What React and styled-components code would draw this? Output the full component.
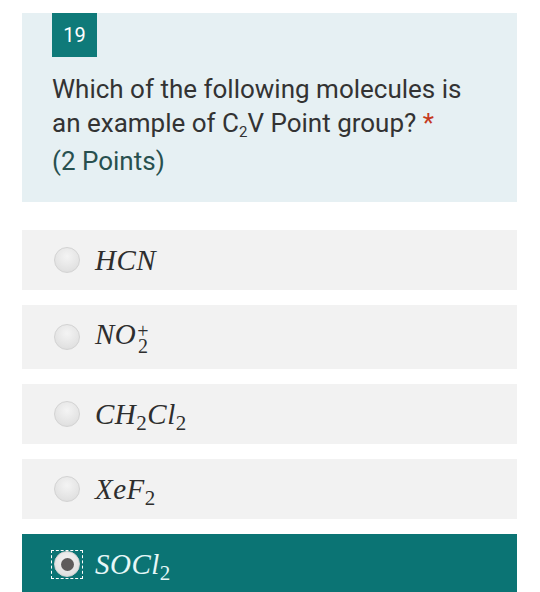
import React from 'react';
import styled, { createGlobalStyle } from 'styled-components';

const GlobalStyle = createGlobalStyle`
  html, body {
    margin: 0;
    padding: 0;
    background: #ffffff;
  }
  body {
    font-family: Roboto, "Liberation Sans", sans-serif;
  }
`;

const Page = styled.main`
  width: 540px;
  height: 592px;
  overflow: hidden;
  box-sizing: border-box;
  padding: 13px 23px 0 22px;
  display: flex;
  flex-direction: column;
`;

const Header = styled.section`
  background: #e6f0f3;
  padding: 0 24px 24px 30px;
  display: flex;
  flex-direction: column;
  align-items: flex-start;
`;

const Badge = styled.div`
  width: 45px;
  height: 44px;
  background: #0f7a79;
  color: #ffffff;
  font-size: 20px;
  display: flex;
  align-items: center;
  justify-content: center;
`;

const Question = styled.h2`
  margin: 15px 0 0;
  max-width: 412px;
  font-family: Roboto, sans-serif;
  font-weight: 400;
  font-size: 26px;
  line-height: 34px;
  color: #333333;
`;

const Sub = styled.span`
  font-size: 15px;
  position: relative;
  top: 5px;
`;

const Star = styled.span`
  color: #c5391e;
`;

const Points = styled.span`
  display: block;
  color: #28504f;
`;

const Options = styled.div`
  margin-top: 28px;
  display: flex;
  flex-direction: column;
  gap: 15px;
`;

const Option = styled.label`
  display: flex;
  align-items: center;
  gap: 14px;
  height: ${(p) => (p.$tall ? 64 : 60)}px;
  padding-left: 32px;
  background: ${(p) => (p.$selected ? '#0b7474' : '#f2f2f2')};
  color: ${(p) => (p.$selected ? '#e6f7f7' : '#2e2e2e')};
`;

const RadioWrap = styled.span`
  display: flex;
  align-items: center;
  justify-content: center;
  width: 32px;
  height: 29px;
  margin: 0 -2px 0 -3px;
  box-sizing: border-box;
  border: 1px dashed ${(p) => (p.$focus ? '#ffffff' : 'transparent')};
`;

const Radio = styled.span`
  width: 26px;
  height: 26px;
  border-radius: 50%;
  box-sizing: border-box;
  background: radial-gradient(circle at 50% 35%, #f4f4f4 0%, #e2e2e2 70%, #d6d6d6 100%);
  border: 1px solid #d3d3d3;
  display: flex;
  align-items: center;
  justify-content: center;

  &::after {
    content: '';
    display: ${(p) => (p.$checked ? 'block' : 'none')};
    width: 13px;
    height: 13px;
    border-radius: 50%;
    background: #5e5b5b;
  }
`;

const Formula = styled.span`
  font-family: "Liberation Serif", "Times New Roman", serif;
  font-style: italic;
  font-size: 29px;
  letter-spacing: 0.5px;
  line-height: 1;
`;

const Num = styled.span`
  font-style: normal;
  font-size: 21px;
  position: relative;
  top: 6px;
`;

const Stack = styled.span`
  display: inline-block;
  vertical-align: -9px;
  font-style: normal;
  font-size: 20px;
  line-height: 15px;
  margin-left: 1px;
  text-align: center;

  & > span {
    display: block;
  }
`;

const Choice = ({ children, selected, tall }) => (
  <Option $selected={selected} $tall={tall}>
    <RadioWrap $focus={selected}>
      <Radio $checked={selected} />
    </RadioWrap>
    <Formula>{children}</Formula>
  </Option>
);

export default function App() {
  return (
    <>
      <GlobalStyle />
      <Page>
        <Header>
          <Badge>19</Badge>
          <Question>
            Which of the following molecules is an example of C<Sub>2</Sub>V Point group? <Star>*</Star>
            <Points>(2 Points)</Points>
          </Question>
        </Header>
        <Options>
          <Choice>HCN</Choice>
          <Choice tall>
            NO<Stack><span>+</span><span>2</span></Stack>
          </Choice>
          <Choice>
            CH<Num>2</Num>Cl<Num>2</Num>
          </Choice>
          <Choice>
            XeF<Num>2</Num>
          </Choice>
          <Choice selected>
            SOCl<Num>2</Num>
          </Choice>
        </Options>
      </Page>
    </>
  );
}
